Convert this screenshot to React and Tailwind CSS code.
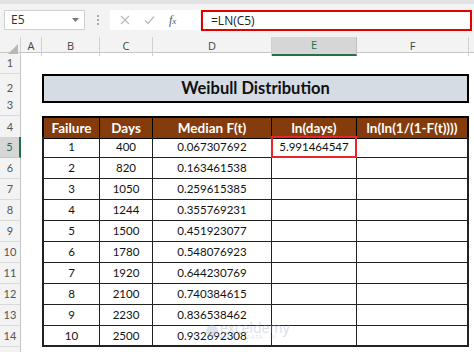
import React from 'react';

const cols = 'grid grid-cols-[21px_21px_58px_53px_119px_85px_112px_1fr]';

const data = [
    [1, 400, '0.067307692'],
    [2, 820, '0.163461538'],
    [3, 1050, '0.259615385'],
    [4, 1244, '0.355769231'],
    [5, 1500, '0.451923077'],
    [6, 1780, '0.548076923'],
    [7, 1920, '0.644230769'],
    [8, 2100, '0.740384615'],
    [9, 2230, '0.836538462'],
    [10, 2500, '0.932692308'],
];

const RowHead = ({ n, active }) => (
    <div
        className={`flex items-center justify-center border-b text-[11px] ${active
            ? 'bg-[#d6d6d6] border-b-[#c6c6c6] border-r-2 border-r-[#217346] text-[#217346]'
            : 'bg-[#f3f3f3] border-b-[#dadada] border-r border-r-[#c6c6c6] text-[#555]'
            }`}
    >
        {n}
    </div>
);

const App = () => {
    return (
        <div className="relative w-[474px] h-[352px] overflow-hidden bg-white font-['Lato',sans-serif] text-[#111]">
            {/* formula bar */}
            <div className="h-[37px] bg-[#f3f3f3] border-t-[4px] border-[#e2e2e2] flex items-start pt-[6px] pl-[4px] font-['Open_Sans',sans-serif]">
                <div className="w-[81px] h-[20px] bg-white border border-[#d0d0d0] flex items-center justify-between pl-[6px] pr-[5px] text-[12px] text-[#333]">
                    <span>E5</span>
                    <svg width="7" height="4" viewBox="0 0 7 4"><path d="M0 0h7L3.5 4z" fill="#777" /></svg>
                </div>
                <div className="w-[25px] h-[20px] flex flex-col items-center justify-center gap-[2px]">
                    <span className="w-[2px] h-[2px] bg-[#aaa]" />
                    <span className="w-[2px] h-[2px] bg-[#aaa]" />
                    <span className="w-[2px] h-[2px] bg-[#aaa]" />
                </div>
                <div className="w-[90px] h-[20px] bg-white flex items-center pl-[10px] gap-[14px]">
                    <svg width="10" height="10" viewBox="0 0 10 10"><path d="M1 1l8 8M9 1l-8 8" stroke="#bbb" strokeWidth="1.2" /></svg>
                    <svg width="11" height="10" viewBox="0 0 11 10"><path d="M1 5.5l3 3L10 1.5" stroke="#bbb" strokeWidth="1.2" fill="none" /></svg>
                    <span className="text-[12px] italic text-[#555] font-['Liberation_Serif',serif]">f<span className="text-[9px]">x</span></span>
                </div>
                <div className="flex-1 h-[21px] ml-[1px] mr-[2px] bg-white border-2 border-[#e00000] flex items-center pl-[8px] text-[12px] text-[#222]">
                    =LN(C5)
                </div>
            </div>

            {/* column headers */}
            <div className={`${cols} h-[16px] bg-[#f3f3f3] border-b border-[#c6c6c6] text-[11px] text-[#444] font-['Open_Sans',sans-serif]`}>
                <div className="relative border-r border-[#d0d0d0]">
                    <svg className="absolute right-[2px] bottom-[2px]" width="10" height="10" viewBox="0 0 10 10"><path d="M10 0v10H0z" fill="#b8b8b8" /></svg>
                </div>
                {['A', 'B', 'C', 'D'].map(c => (
                    <div key={c} className="flex items-center justify-center border-r border-[#d0d0d0]">{c}</div>
                ))}
                <div className="flex items-center justify-center border-r border-[#c0c0c0] bg-[#d6d6d6] border-b-2 border-b-[#217346] text-[#217346]">E</div>
                <div className="flex items-center justify-center border-r border-[#d0d0d0]">F</div>
                <div />
            </div>

            {/* rows 1-3 */}
            <div className={`${cols} h-[21px]`}><RowHead n={1} /></div>
            <div className={`${cols} h-[21px]`}>
                <RowHead n={2} />
                <div />
                <div className="col-span-5 border-2 border-black bg-[#d6dce4] flex items-center justify-center font-bold text-[16.5px]">
                    Weibull Distribution
                </div>
            </div>
            <div className={`${cols} h-[21px]`}><RowHead n={3} /></div>

            {/* table header */}
            <div className={`${cols} h-[21px]`}>
                <RowHead n={4} />
                <div />
                {['Failure', 'Days', 'Median F(t)', 'ln(days)', 'ln(ln(1/(1-F(t))))'].map((h, i) => (
                    <div
                        key={h}
                        className={`bg-[#843c0c] text-white font-bold text-[13.5px] flex items-center justify-center whitespace-nowrap border-t-2 border-r border-b border-black ${i === 0 ? 'border-l-2' : ''} ${i === 4 ? 'border-r-2' : ''}`}
                    >
                        {h}
                    </div>
                ))}
            </div>

            {/* data rows */}
            {data.map(([f, d, m], r) => (
                <div key={f} className={`${cols} h-[21px]`}>
                    <RowHead n={r + 5} active={r === 0} />
                    <div />
                    {[f, d, m, r === 0 ? '5.991464547' : '', ''].map((v, i) => (
                        <div
                            key={i}
                            className={`relative flex items-center justify-center text-[11.5px] border-r border-b border-[#222] ${i === 0 ? 'border-l-2' : ''} ${i === 4 ? 'border-r-2' : ''} ${r === 9 ? 'border-b-2' : ''}`}
                        >
                            {v}
                            {r === 0 && i === 3 && (
                                <div className="absolute inset-[-1px] border-2 border-[#e8262a]" />
                            )}
                        </div>
                    ))}
                </div>
            ))}
            <div className={`${cols} h-[21px]`}><RowHead n="" /></div>

            {/* watermark */}
            <div className="absolute left-[206px] top-[321px] flex items-center gap-[2px] opacity-35 pointer-events-none">
                <div className="w-[12px] h-[12px] rounded-full bg-[#9db4cf]" />
                <div className="flex flex-col leading-none">
                    <span className="text-[14px] text-[#8fa9c8] font-['Noto_Sans',sans-serif]">exceldemy</span>
                    <span className="text-[5px] tracking-[1px] text-[#8fa9c8]">EXCEL · DATA · BI</span>
                </div>
            </div>
        </div>
    );
};

export default App;
